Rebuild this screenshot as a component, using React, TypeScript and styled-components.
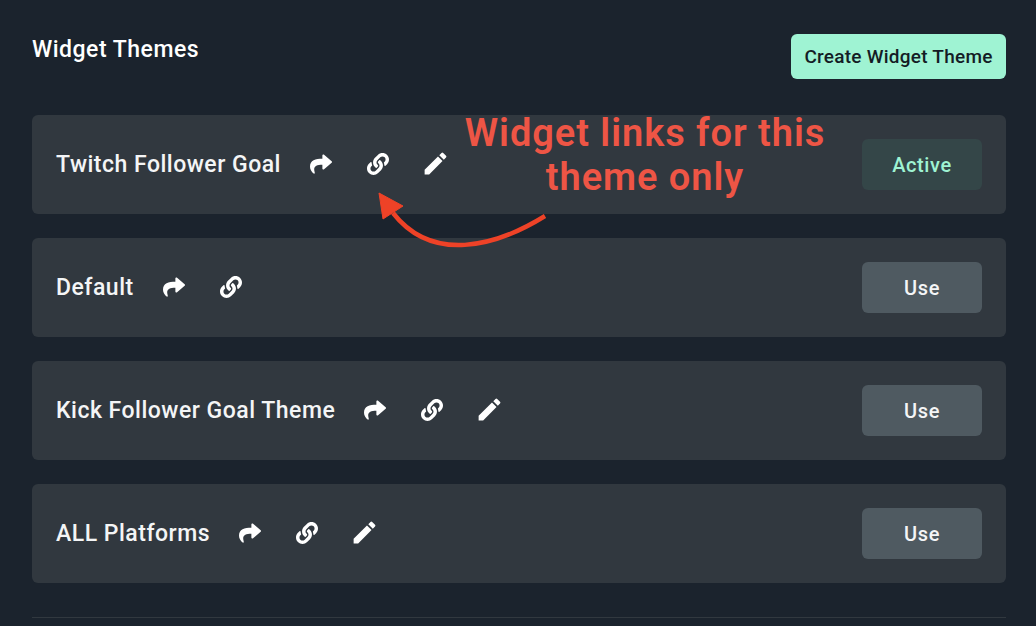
import styled, {createGlobalStyle} from "styled-components";
import {FaShare, FaLink} from "react-icons/fa";
import {MdEdit} from "react-icons/md";

const GlobalStyle = createGlobalStyle`
  html, body {
    margin: 0;
    padding: 0;
    background: #1b232d;
  }
  body {
    font-family: Roboto, "Liberation Sans", sans-serif;
    overflow: hidden;
  }
`;

const Page = styled.div`
  position: relative;
  width: 1036px;
  height: 626px;
  box-sizing: border-box;
  padding: 34px 30px 0 32px;
  overflow: hidden;
  background: #1b232d;
`;

const Header = styled.header`
  display: flex;
  justify-content: space-between;
  align-items: flex-start;
  margin-bottom: 36px;
`;

const Title = styled.h2`
  margin: 0;
  padding-top: 3px;
  font-size: 23px;
  line-height: 26px;
  font-weight: 500;
  letter-spacing: 0.5px;
  color: #ffffff;
`;

const CreateButton = styled.button`
  width: 215px;
  height: 45px;
  border: 0;
  border-radius: 6px;
  padding: 0;
  background: #9ff3d3;
  color: #141c25;
  font: 500 19px Roboto, sans-serif;
  letter-spacing: 0.25px;
`;

const ThemeList = styled.div`
  display: flex;
  flex-direction: column;
  gap: 24px;
`;

const Row = styled.div`
  height: 99px;
  box-sizing: border-box;
  display: flex;
  align-items: center;
  justify-content: space-between;
  padding: 0 24px;
  border-radius: 6px;
  background: #31383f;
`;

const RowLeft = styled.div`
  display: flex;
  align-items: center;
  margin-top: -2px;
`;

const ThemeName = styled.span`
  position: relative;
  top: 1px;
  font-size: 23px;
  font-weight: 500;
  letter-spacing: 0.5px;
  color: #f4f5f6;
  margin-right: 29px;
`;

const Actions = styled.div`
  display: flex;
  align-items: center;
  gap: 35px;
  color: #ffffff;
  svg {
    display: block;
    width: 22px;
    height: 22px;
  }
`;

const EditIcon = styled(MdEdit)`
  && {
    width: 29px;
    height: 29px;
    margin: -4px -3px -3px -3px;
  }
`;

const UseButton = styled.button<{$active?: boolean}>`
  width: 120px;
  height: 51px;
  border: 0;
  border-radius: 6px;
  padding: 0;
  background: ${props => props.$active ? "#344648" : "#4f5a61"};
  color: ${props => props.$active ? "#9ff3d3" : "#f4f5f6"};
  font: 500 20px Roboto, sans-serif;
  letter-spacing: 0.6px;
`;

const Divider = styled.hr`
  margin: 34px 0 0;
  border: 0;
  border-top: 1px solid #31383f;
`;

const Note = styled.div`
  position: absolute;
  left: 425px;
  top: 111px;
  width: 440px;
  text-align: center;
  font-size: 38px;
  line-height: 44px;
  font-weight: 600;
  letter-spacing: 0.95px;
  color: #ee5545;
`;

const Arrow = styled.svg`
  position: absolute;
  left: 370px;
  top: 185px;
`;

const themes = [
    {name: "Twitch Follower Goal", active: true, editable: true},
    {name: "Default", active: false, editable: false},
    {name: "Kick Follower Goal Theme", active: false, editable: true},
    {name: "ALL Platforms", active: false, editable: true},
];

function App() {
    return (
        <Page>
            <GlobalStyle/>
            <Header>
                <Title>Widget Themes</Title>
                <CreateButton>Create Widget Theme</CreateButton>
            </Header>
            <ThemeList>
                {themes.map((theme) => (
                    <Row key={theme.name}>
                        <RowLeft>
                            <ThemeName>{theme.name}</ThemeName>
                            <Actions>
                                <FaShare/>
                                <FaLink/>
                                {theme.editable && <EditIcon/>}
                            </Actions>
                        </RowLeft>
                        <UseButton $active={theme.active}>{theme.active ? "Active" : "Use"}</UseButton>
                    </Row>
                ))}
            </ThemeList>
            <Divider/>
            <Note>Widget links for this<br/>theme only</Note>
            <Arrow width="190" height="80" viewBox="0 0 190 80">
                <path d="M175 31 C125 62 62 78 23 28" fill="none" stroke="#ee4227" strokeWidth="4.5"/>
                <path d="M9 8 L33 21 L13 34 Z" fill="#ee4227" stroke="#ee4227" strokeWidth="1"/>
            </Arrow>
        </Page>
    );
}

export default App;
